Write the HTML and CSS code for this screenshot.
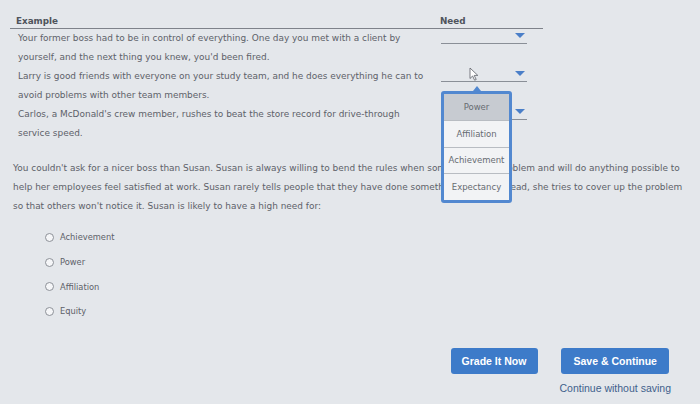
FILE: index.html
```html
<!DOCTYPE html>
<html lang="en">
<head>
<meta charset="utf-8">
<title>Question</title>
<link rel="stylesheet" href="styles.css">
</head>
<body>
<div class="page">
  <div class="match">
    <div class="match-head">
      <div class="col-ex">Example</div>
      <div class="col-need">Need</div>
    </div>
    <div class="match-row">
      <div class="ex">Your former boss had to be in control of everything. One day you met with a client by yourself, and the next thing you knew, you'd been fired.</div>
      <div class="need"><div class="select"><span class="arrow"></span></div></div>
    </div>
    <div class="match-row">
      <div class="ex">Larry is good friends with everyone on your study team, and he does everything he can to avoid problems with other team members.</div>
      <div class="need"><div class="select"><span class="arrow"></span></div></div>
    </div>
    <div class="match-row">
      <div class="ex">Carlos, a McDonald's crew member, rushes to beat the store record for drive-through service speed.</div>
      <div class="need"><div class="select"><span class="arrow"></span></div></div>
    </div>
  </div>

  <p class="question">You couldn't ask for a nicer boss than Susan. Susan is always willing to bend the rules when someone has a problem and will do anything possible to help her employees feel satisfied at work. Susan rarely tells people that they have done something wrong. Instead, she tries to cover up the problem so that others won't notice it. Susan is likely to have a high need for:</p>

  <ul class="options">
    <li class="option"><span class="radio"></span><span class="label">Achievement</span></li>
    <li class="option"><span class="radio"></span><span class="label">Power</span></li>
    <li class="option"><span class="radio"></span><span class="label">Affiliation</span></li>
    <li class="option"><span class="radio"></span><span class="label">Equity</span></li>
  </ul>

  <div class="actions">
    <button class="btn btn-grade">Grade It Now</button>
    <div class="save-group">
      <button class="btn btn-save">Save &amp; Continue</button>
      <a class="skip" href="#">Continue without saving</a>
    </div>
  </div>

  <div class="menu">
    <div class="menu-item active">Power</div>
    <div class="menu-item">Affiliation</div>
    <div class="menu-item">Achievement</div>
    <div class="menu-item">Expectancy</div>
  </div>

  <svg class="cursor" width="10" height="14" viewBox="0 0 10 14">
    <path d="M1 1 L1 11.5 L3.6 9 L5.6 13.2 L7.2 12.5 L5.2 8.4 L8.8 8.4 Z" fill="#ffffff" stroke="#5a5e66" stroke-width="0.8" stroke-linejoin="round"/>
  </svg>
</div>
</body>
</html>
```

FILE: styles.css
```css
html, body {
  margin: 0;
  padding: 0;
}

body {
  background: #e4e7eb;
  font-family: "DejaVu Sans", Verdana, sans-serif;
  font-size: 8.95px;
  color: #5d6169;
}

.page {
  position: relative;
  width: 700px;
  height: 404px;
  padding: 10px 0 0 10px;
  box-sizing: border-box;
  overflow: hidden;
}

.match {
  width: 533px;
}

.match-head {
  display: grid;
  grid-template-columns: 430px 103px;
  height: 19px;
  padding-top: 2px;
  box-sizing: border-box;
  line-height: 18px;
  border-bottom: 1px solid #7e828a;
  font-weight: bold;
  font-size: 8.8px;
  color: #4f545c;
}

.col-ex {
  padding-left: 6px;
}

.match-row {
  display: grid;
  grid-template-columns: 431px 102px;
  height: 38px;
  line-height: 19px;
}

.ex {
  padding-left: 8px;
  padding-right: 14px;
}

.select {
  position: relative;
  width: 86px;
  height: 14px;
  border-bottom: 1px solid #8a8f97;
}

.arrow {
  position: absolute;
  right: 2px;
  top: 4px;
  width: 0;
  height: 0;
  border-left: 5px solid transparent;
  border-right: 5px solid transparent;
  border-top: 5px solid #4a7fc8;
}

.question {
  width: 676px;
  margin: 16px 0 0 3px;
  line-height: 19px;
}

.options {
  list-style: none;
  margin: 9px 0 0;
  padding: 0 0 0 35px;
}

.option {
  display: flex;
  align-items: center;
  height: 24.7px;
  font-size: 8.3px;
}

.radio {
  width: 7px;
  height: 7px;
  border: 1px solid #8d9198;
  border-radius: 50%;
  background: #f5f6f8;
}

.label {
  margin-left: 6px;
}

.actions {
  display: flex;
  justify-content: flex-end;
  align-items: flex-start;
  gap: 22px;
  margin-top: 24px;
  padding-right: 29px;
}

.save-group {
  display: flex;
  flex-direction: column;
  align-items: center;
}

.btn {
  height: 26px;
  padding: 0;
  border: none;
  border-radius: 3px;
  background: #3d7bc9;
  color: #ffffff;
  font-family: "Liberation Sans", Arial, sans-serif;
  font-weight: bold;
  font-size: 10.5px;
}

.btn-grade {
  width: 87px;
}

.btn-save {
  width: 108px;
}

.skip {
  margin-top: 8px;
  font-family: "Liberation Sans", Arial, sans-serif;
  font-size: 10.5px;
  color: #3f5f8c;
  text-decoration: none;
}

.menu {
  position: absolute;
  left: 441px;
  top: 91px;
  width: 71px;
  height: 112px;
  box-sizing: border-box;
  border: 3px solid #5288d0;
  border-radius: 3px;
  background: #f2f3f5;
  display: flex;
  flex-direction: column;
}

.menu::before {
  content: "";
  position: absolute;
  left: 50%;
  top: -8px;
  margin-left: -4px;
  border-left: 4px solid transparent;
  border-right: 4px solid transparent;
  border-bottom: 5px solid #5288d0;
}

.menu-item {
  flex: 1;
  display: flex;
  align-items: center;
  justify-content: center;
  font-size: 8.5px;
  color: #676b72;
}

.menu-item + .menu-item {
  border-top: 1px solid #b8bcc2;
}

.menu-item.active {
  background: #c7cbd1;
}

.cursor {
  position: absolute;
  left: 469px;
  top: 67px;
}
```
